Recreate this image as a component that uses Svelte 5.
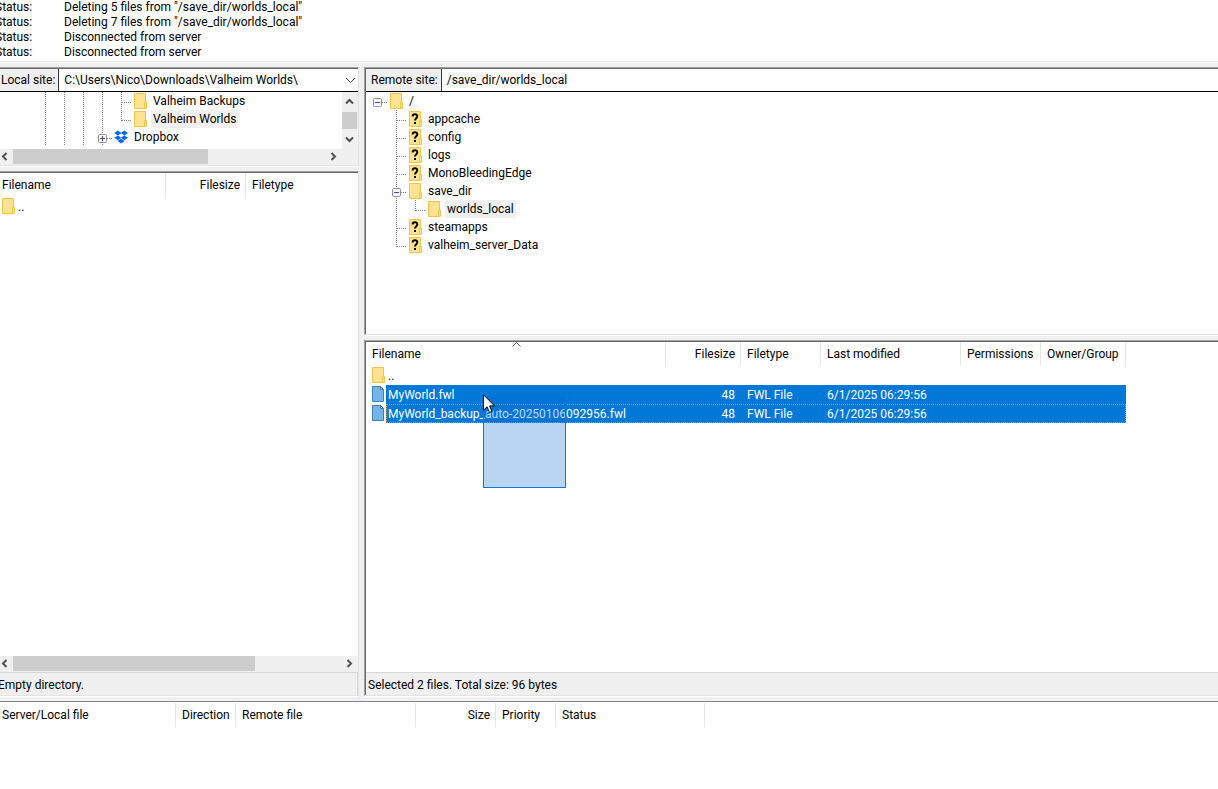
<script>
  const log = [
    'Deleting 5 files from "/save_dir/worlds_local"',
    'Deleting 7 files from "/save_dir/worlds_local"',
    'Disconnected from server',
    'Disconnected from server'
  ];

  const localTree = [
    { guides: ['line', 'line', 'line', 'line', 'tee'], icon: 'folder', name: 'Valheim Backups' },
    { guides: ['line', 'line', 'line', 'line', 'elbow'], icon: 'folder', name: 'Valheim Worlds', selected: true },
    { guides: ['line', 'line', 'line', 'plus'], icon: 'dropbox', name: 'Dropbox' }
  ];

  const remoteTree = [
    { guides: ['root'], icon: 'folder', name: '/' },
    { guides: ['none', 'tee'], icon: 'unknown', name: 'appcache' },
    { guides: ['none', 'tee'], icon: 'unknown', name: 'config' },
    { guides: ['none', 'tee'], icon: 'unknown', name: 'logs' },
    { guides: ['none', 'tee'], icon: 'unknown', name: 'MonoBleedingEdge' },
    { guides: ['none', 'minus'], icon: 'folder', name: 'save_dir' },
    { guides: ['none', 'line', 'elbow'], icon: 'folder', name: 'worlds_local', selected: true },
    { guides: ['none', 'tee'], icon: 'unknown', name: 'steamapps' },
    { guides: ['none', 'elbow'], icon: 'unknown', name: 'valheim_server_Data' }
  ];

  const remoteFiles = [
    { name: 'MyWorld.fwl', size: 48, type: 'FWL File', modified: '6/1/2025 06:29:56' },
    { name: 'MyWorld_backup_auto-20250106092956.fwl', size: 48, type: 'FWL File', modified: '6/1/2025 06:29:56', focused: true }
  ];

  let localPath = $state('C:\\Users\\Nico\\Downloads\\Valheim Worlds\\');
  let remotePath = $state('/save_dir/worlds_local');
</script>

{#snippet icon(kind)}
  {#if kind === 'dropbox'}
    <svg class="icon" width="16" height="16" viewBox="0 0 16 16" aria-hidden="true">
      <path fill="#0a66ff" d="M4.9 1.6 8.4 4 4.9 6.4 1.2 4zM11.3 1.6 15 4l-3.7 2.4L7.8 4zM4.9 6.4 8.4 8.8 4.9 11.2 1.2 8.8zM11.3 6.4 15 8.8l-3.7 2.4L7.8 8.8zM8.1 9.8l3.5 2.3-3.5 2.3-3.5-2.3z" />
    </svg>
  {:else if kind === 'file'}
    <svg class="icon" width="16" height="16" viewBox="0 0 16 16" aria-hidden="true">
      <path fill="#75b4e6" stroke="#3a7fb5" d="M2.5.5h8l3 3v12h-11z" />
      <path fill="#a9d3f3" stroke="#3a7fb5" d="M10.5.5v3h3z" />
    </svg>
  {:else}
    <svg class="icon" width="16" height="16" viewBox="0 0 16 16" aria-hidden="true">
      <path fill="#ffe391" stroke="#edc54c" d="M2.5.5h11v15h-11z" />
      <path fill="#ffe391" stroke="#edc54c" d="M12.5 9.5h2v6h-2z" />
      {#if kind === 'unknown'}
        <path fill="none" stroke="#000" stroke-width="2" d="M5.6 5.6C5.6 2.6 10.5 2.6 10.3 5.4 10.2 7.2 8 7.2 8 9.6" />
        <path fill="#000" d="M7 11h2v2H7z" />
      {/if}
    </svg>
  {/if}
{/snippet}

{#snippet guide(kind)}
  <svg class="guide" width="19" height="18" viewBox="0 0 19 18" aria-hidden="true">
    <g fill="none" stroke="#808080" stroke-dasharray="1 1">
      {#if kind === 'line' || kind === 'tee' || kind === 'plus' || kind === 'minus'}
        <path d="M9.5 0v18" />
      {:else if kind === 'elbow'}
        <path d="M9.5 0v11" />
      {/if}
      {#if kind !== 'line' && kind !== 'none'}
        <path d="M10 10.5h9" />
      {/if}
    </g>
    {#if kind === 'plus' || kind === 'minus' || kind === 'root'}
      <rect x="5.5" y="6.5" width="8" height="8" rx="1" fill="#f6f6f6" stroke="#919191" />
      <path stroke="#3a4fa0" d={kind === 'plus' ? 'M7 10.5h5M9.5 8v5' : 'M7 10.5h5'} />
    {/if}
  </svg>
{/snippet}

{#snippet tree(rows, label)}
  <ul class="tree" aria-label={label}>
    {#each rows as row}
      <li>
        {#each row.guides as kind}{@render guide(kind)}{/each}
        {@render icon(row.icon)}
        <span class="node" class:current={row.selected}>{row.name}</span>
      </li>
    {/each}
  </ul>
{/snippet}

{#snippet arrow(d)}
  <svg width="9" height="9" viewBox="0 0 9 9" aria-hidden="true"><path fill="none" stroke="#505050" stroke-width="2" {d} /></svg>
{/snippet}

{#snippet hscroll(fill)}
  <div class="hscroll">
    <button class="back" aria-label="Scroll left">{@render arrow('M6.5 1 3 4.5 6.5 8')}</button>
    <div class="track"><div class="thumb" style:width="{fill}%"></div></div>
    <button aria-label="Scroll right">{@render arrow('M2.5 1 6 4.5 2.5 8')}</button>
  </div>
{/snippet}

<main>
  <section class="log" aria-label="Message log">
    {#each log as message}
      <p><span>Status:</span>{message}</p>
    {/each}
  </section>

  <div class="sites">
    <div class="side local">
      <section class="pane">
        <div class="path">
          <label for="local-path">Local site:</label>
          <div class="combo">
            <select id="local-path" bind:value={localPath}>
              <option>{'C:\\Users\\Nico\\Downloads\\Valheim Worlds\\'}</option>
            </select>
            <svg width="11" height="7" viewBox="0 0 11 7" aria-hidden="true"><path fill="none" stroke="#444" d="M1 1l4.5 4.5L10 1" /></svg>
          </div>
        </div>
        <div class="tree-area">
          {@render tree(localTree, 'Local directories')}
          <div class="vscroll">
            <button aria-label="Scroll up">{@render arrow('M1 6.5 4.5 3 8 6.5')}</button>
            <div class="thumb"></div>
            <button aria-label="Scroll down">{@render arrow('M1 2.5 4.5 6 8 2.5')}</button>
          </div>
        </div>
        <div class="tree-foot">{@render hscroll(62.5)}</div>
      </section>

      <section class="pane grow">
        <div class="list">
          <table class="local-files">
            <colgroup><col class="w166" /><col class="w80" /><col /></colgroup>
            <thead><tr><th>Filename</th><th class="num">Filesize</th><th>Filetype</th></tr></thead>
            <tbody><tr><td class="file">{@render icon('folder')}<span>..</span></td><td></td><td></td></tr></tbody>
          </table>
        </div>
        {@render hscroll(73.8)}
        <p class="status">Empty directory.</p>
      </section>
    </div>

    <div class="side remote">
      <section class="pane">
        <div class="path">
          <label for="remote-path">Remote site:</label>
          <input id="remote-path" type="text" bind:value={remotePath} />
        </div>
        {@render tree(remoteTree, 'Remote directories')}
      </section>

      <section class="pane grow">
        <div class="list">
          <svg class="sort" width="9" height="5" viewBox="0 0 9 5" aria-hidden="true"><path fill="none" stroke="#555" d="M.5 4.5l4-4 4 4" /></svg>
          <table class="remote-files">
            <colgroup>
              <col class="w300" /><col class="w75" /><col class="w80" /><col class="w140" /><col class="w80" /><col class="w85" />
            </colgroup>
            <thead>
              <tr><th>Filename</th><th class="num">Filesize</th><th>Filetype</th><th>Last modified</th><th>Permissions</th><th>Owner/Group</th></tr>
            </thead>
            <tbody>
              <tr><td class="file">{@render icon('folder')}<span>..</span></td><td></td><td></td><td></td><td></td><td></td></tr>
              {#each remoteFiles as file}
                <tr class="picked" class:focused={file.focused}>
                  <td class="file">{@render icon('file')}<span>{file.name}</span></td>
                  <td class="num">{file.size}</td>
                  <td>{file.type}</td>
                  <td>{file.modified}</td>
                  <td></td>
                  <td></td>
                </tr>
              {/each}
            </tbody>
          </table>
          <div class="marquee">
            <svg width="13" height="20" viewBox="0 0 13 20" aria-hidden="true">
              <path fill="#fff" stroke="#000" d="M.5.8v15.4l3.6-3.4 2.4 5.7 2.5-1-2.4-5.6h5z" />
            </svg>
          </div>
        </div>
        <p class="status">Selected 2 files. Total size: 96 bytes</p>
      </section>
    </div>
  </div>

  <section class="queue" aria-label="Transfer queue">
    <table>
      <colgroup>
        <col class="w176" /><col class="w60" /><col class="w180" /><col class="w80" /><col class="w60" /><col class="w149" />
      </colgroup>
      <thead>
        <tr><th>Server/Local file</th><th>Direction</th><th>Remote file</th><th class="num">Size</th><th>Priority</th><th>Status</th></tr>
      </thead>
    </table>
  </section>
</main>

<style>
  :global(body) {
    margin: 0;
    background: #f0f0f0;
  }

  main {
    display: flex;
    flex-direction: column;
    height: 100vh;
    overflow: hidden;
    background: #f0f0f0;
    color: #000;
    font: 12px/15px Roboto, "Open Sans", sans-serif;
  }

  p {
    margin: 0;
  }

  button {
    display: flex;
    align-items: center;
    justify-content: center;
    flex: none;
    width: 17px;
    height: 15px;
    padding: 0;
    border: 0;
    background: #f0f0f0;
  }

  /* Message log */
  .log {
    flex: none;
    height: 62px;
    box-sizing: border-box;
    border-bottom: 1px solid #e3e3e3;
    background: #fff;
    margin-bottom: 5px;
    box-shadow: 0 1px #fff;
  }

  .log p {
    display: flex;
    white-space: pre;
  }

  .log span {
    width: 69px;
    margin-left: -5px;
  }

  /* Panes */
  .sites {
    display: flex;
    gap: 5px;
    flex: 1;
    min-height: 0;
  }

  .side {
    display: flex;
    flex-direction: column;
    gap: 5px;
    min-width: 0;
    min-height: 0;
  }

  .local {
    flex: 0 0 359px;
  }

  .remote {
    flex: 1;
  }

  .pane {
    display: flex;
    flex-direction: column;
    min-height: 0;
    border-top: 1px solid #a0a0a0;
    border-bottom: 1px solid #e3e3e3;
    box-shadow: inset 0 1px #696969, 0 1px #fff;
    padding-top: 1px;
    background: #fff;
  }

  .local .pane {
    border-right: 1px solid #e3e3e3;
  }

  .remote .pane {
    border-left: 1px solid #a0a0a0;
    padding-left: 1px;
    box-shadow: inset 1px 1px #696969, 0 1px #fff;
  }

  .grow {
    flex: 1;
  }

  .path {
    display: flex;
    flex: none;
    height: 22px;
    border-bottom: 1px solid #000;
  }

  .path label {
    display: flex;
    align-items: center;
    padding: 0 3px 0 5px;
    background: #f0f0f0;
    border-right: 1px solid #333;
    white-space: nowrap;
  }

  .local .path label {
    padding-left: 1px;
  }

  .combo {
    display: flex;
    flex: 1;
    align-items: center;
    padding-right: 2px;
  }

  select,
  input {
    flex: 1;
    min-width: 0;
    height: 22px;
    box-sizing: border-box;
    padding: 0 5px;
    border: 0;
    background: transparent;
    color: inherit;
    font: inherit;
    appearance: none;
    outline: 0;
  }

  /* Directory trees */
  .tree {
    flex: 1;
    margin: 0;
    padding: 0;
    overflow: hidden;
    list-style: none;
  }

  .local .tree {
    padding-left: 36px;
  }

  .remote .tree {
    flex: none;
    height: 242px;
    padding-left: 2px;
  }

  .tree li {
    display: flex;
    height: 18px;
  }

  .icon {
    flex: none;
    display: block;
    margin: 1px 2px 0 1px;
  }

  .guide {
    flex: none;
    display: block;
  }

  .node {
    padding: 0 2px;
    margin-left: 1px;
    line-height: 18px;
    white-space: nowrap;
  }

  .current {
    background: #f0f0f0;
  }

  .tree-area {
    display: flex;
    height: 57px;
  }

  .tree-foot {
    padding-right: 16px;
    background: #f0f0f0;
  }

  /* Scroll bars */
  .vscroll {
    display: flex;
    flex-direction: column;
    justify-content: space-between;
    align-items: flex-start;
    width: 16px;
    background: #f0f0f0;
  }

  .vscroll button {
    width: 15px;
    height: 19px;
  }

  .vscroll .thumb {
    width: 15px;
    height: 17px;
  }

  .hscroll {
    display: flex;
    flex: none;
    height: 16px;
    align-items: flex-start;
    background: #f0f0f0;
  }

  .hscroll .back {
    justify-content: flex-start;
    width: 13px;
  }

  .track {
    flex: 1;
  }

  .thumb {
    height: 15px;
    background: #cdcdcd;
  }

  /* File lists */
  .list {
    position: relative;
    flex: 1;
    min-height: 0;
    overflow: hidden;
  }

  table {
    table-layout: fixed;
    width: 0;
    border-collapse: collapse;
    white-space: nowrap;
  }

  .local-files {
    width: 100%;
  }

  .w60 { width: 60px; }
  .w75 { width: 75px; }
  .w80 { width: 80px; }
  .w85 { width: 85px; }
  .w140 { width: 140px; }
  .w149 { width: 149px; }
  .w166 { width: 166px; }
  .w176 { width: 176px; }
  .w180 { width: 180px; }
  .w300 { width: 300px; }

  th {
    height: 24px;
    padding: 0 0 0 6px;
    box-shadow: inset -1px 0 #e5e5e5;
    font-weight: 400;
    text-align: left;
  }

  .local-files th:last-child {
    box-shadow: none;
  }

  .local-files th:first-child,
  .queue th:first-child {
    padding-left: 2px;
  }

  td {
    box-sizing: border-box;
    height: 19px;
    padding: 2px 0 0 6px;
  }

  th.num,
  td.num {
    padding-left: 0;
    padding-right: 6px;
    text-align: right;
  }

  td.file {
    padding-left: 4px;
  }

  .local-files td.file {
    padding-left: 0;
  }

  .file .icon {
    float: left;
    margin: -2px 2px 0 0;
  }

  .picked {
    position: relative;
    background: linear-gradient(to right, #fff 20px, #0078d7 20px);
    color: #fff;
  }

  .focused::after {
    content: "";
    position: absolute;
    inset: 0 0 0 20px;
    border: 1px dotted #ff8728;
  }

  .sort {
    position: absolute;
    left: 146px;
    top: 0;
  }

  .marquee {
    position: absolute;
    left: 117px;
    top: 52px;
    width: 81px;
    height: 92px;
    border: 1px solid #0078d7;
    background: rgb(0 108 208 / 28%);
  }

  .marquee svg {
    display: block;
    margin: -1px;
  }

  .status {
    flex: none;
    height: 22px;
    padding: 0 2px;
    border-top: 1px solid #d7d7d7;
    background: #f0f0f0;
    line-height: 24px;
  }

  .local .status {
    border-right: 1px solid #d7d7d7;
    padding: 0;
    text-indent: -2px;
  }

  /* Transfer queue */
  .queue {
    flex: none;
    height: 88px;
    margin-top: 5px;
    border-top: 1px solid #828790;
    background: #fff;
    padding-top: 1px;
    box-sizing: border-box;
  }
</style>
